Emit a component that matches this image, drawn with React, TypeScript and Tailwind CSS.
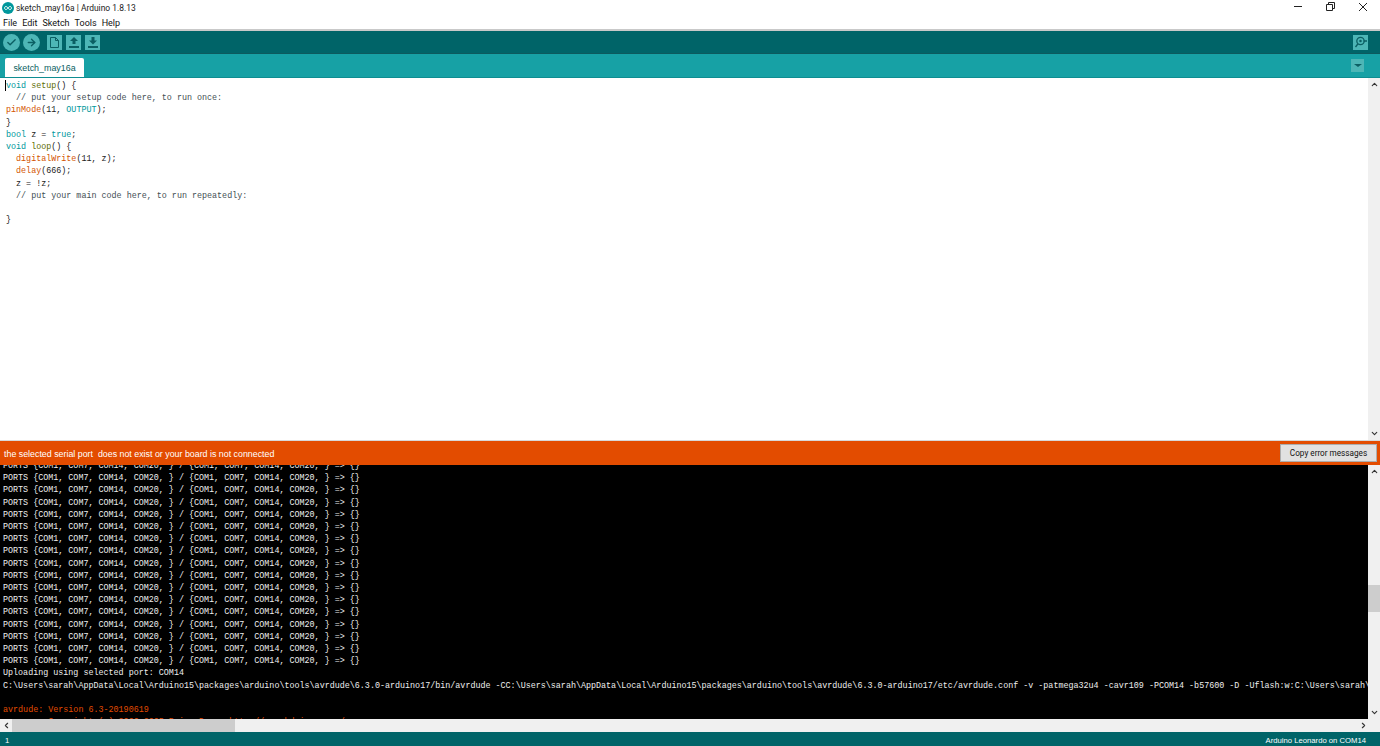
import React from 'react';
import { Check, ArrowRight, ChevronUp, ChevronDown, ChevronLeft, ChevronRight } from 'lucide-react';

const PORTS_LINE = 'PORTS {COM1, COM7, COM14, COM20, } / {COM1, COM7, COM14, COM20, } => {}';
const AVRDUDE_CMD =
  'C:\\Users\\sarah\\AppData\\Local\\Arduino15\\packages\\arduino\\tools\\avrdude\\6.3.0-arduino17/bin/avrdude -CC:\\Users\\sarah\\AppData\\Local\\Arduino15\\packages\\arduino\\tools\\avrdude\\6.3.0-arduino17/etc/avrdude.conf -v -patmega32u4 -cavr109 -PCOM14 -b57600 -D -Uflash:w:C:\\Users\\sarah\\AppData\\Local\\Temp\\arduino_build\\sketch_may16a.ino.hex:i';

const ToolSquare = ({ children }: { children: React.ReactNode }) => (
  <div className="w-[15px] h-[15px] bg-[#4db6b6] flex items-center justify-center">{children}</div>
);

const Keyword = ({ children }: { children: React.ReactNode }) => <span className="text-[#00979c]">{children}</span>;
const Struct = ({ children }: { children: React.ReactNode }) => <span className="text-[#5e6d03]">{children}</span>;
const Func = ({ children }: { children: React.ReactNode }) => <span className="text-[#d35400]">{children}</span>;
const Comment = ({ children }: { children: React.ReactNode }) => <span className="text-[#434f54]">{children}</span>;

export default function App() {
  return (
    <div className="w-[1380px] h-[746px] overflow-hidden flex flex-col bg-white font-['Liberation_Sans',sans-serif]">
      {/* Title bar */}
      <div className="h-[15px] flex items-center relative shrink-0">
        <svg viewBox="0 0 12 12" className="w-[12px] h-[12px] ml-[2px] mt-[1px]">
          <circle cx="6" cy="6" r="6" fill="#00979c" />
          <path d="M2.6 6c0-2 2.2-2 3.4 0s3.4 2 3.4 0-2.2-2-3.4 0-3.4 2-3.4 0z" fill="none" stroke="#fff" strokeWidth="1" />
        </svg>
        <span className="ml-[2px] mt-[1px] font-['Roboto',sans-serif] text-[8.45px] leading-none text-[#222]">sketch_may16a | Arduino 1.8.13</span>
        <svg width="86" height="14" viewBox="0 0 86 14" className="absolute right-0 top-0" fill="none" stroke="#222" strokeWidth="1">
          <path d="M0 6.500h8" />
          <path d="M32.500 4.500h6v6h-6zM34.500 4.500v-2h6v6h-2" />
          <path d="M65 3l8 8M73 3l-8 8" />
        </svg>
      </div>

      {/* Menu bar */}
      <div className="h-[14px] flex items-center gap-[5px] pl-[3px] pt-[4px] font-['Roboto',sans-serif] text-[9px] text-[#111] shrink-0">
        <span>File</span>
        <span>Edit</span>
        <span>Sketch</span>
        <span>Tools</span>
        <span>Help</span>
      </div>
      <div className="h-[2px] bg-[#c9c9c9] shrink-0" />

      {/* Toolbar */}
      <div className="h-[22px] bg-[#006468] flex items-center justify-between pl-[3px] pr-[12px] shrink-0">
        <div className="flex items-center">
          <div className="w-[17px] h-[17px] rounded-full bg-[#4db6b6] flex items-center justify-center">
            <Check className="w-[11px] h-[11px] text-[#0b5f63]" strokeWidth={3} />
          </div>
          <div className="w-[17px] h-[17px] rounded-full bg-[#4db6b6] flex items-center justify-center ml-[3px]">
            <ArrowRight className="w-[11px] h-[11px] text-[#0b5f63]" strokeWidth={3} />
          </div>
          <div className="flex gap-[4px] ml-[7px]">
            <ToolSquare>
              <svg width="9" height="11" viewBox="0 0 9 11" fill="none" stroke="#0b5f63" strokeWidth="1">
                <path d="M.5.500h5l3 3v7h-8zM5.500.500v3h3" />
              </svg>
            </ToolSquare>
            <ToolSquare>
              <svg width="10" height="11" viewBox="0 0 10 11" fill="#0b5f63">
                <path d="M5 0l4 4H6.500v3h-3V4H1zM0 9h10v2H0z" />
              </svg>
            </ToolSquare>
            <ToolSquare>
              <svg width="10" height="11" viewBox="0 0 10 11" fill="#0b5f63">
                <path d="M5 7.500l4-4H6.500V0h-3v3.500H1zM0 9h10v2H0z" />
              </svg>
            </ToolSquare>
          </div>
        </div>
        <ToolSquare>
          <svg width="13" height="12" viewBox="0 0 13 12" fill="none" stroke="#0b5f63" strokeWidth="1.300">
            <circle cx="6.500" cy="5" r="3.700" />
            <path d="M3.800 8L1.500 11M9.500 5H13" />
            <circle cx="6.500" cy="5" r=".6" fill="#0b5f63" />
          </svg>
        </ToolSquare>
      </div>
      <div className="h-px bg-[#0c5a5e] shrink-0" />

      {/* Tab strip */}
      <div className="h-[23px] bg-[#17a1a5] flex items-end justify-between pl-[5px] pr-[16px] shrink-0 relative">
        <div className="h-[19px] w-[79px] pt-[3px] bg-white rounded-t-[2px] flex items-center justify-center text-[8.9px] text-[#0b5f63]">
          sketch_may16a
        </div>
        <div className="w-[13px] h-[13px] bg-[#4db6b6] flex items-center justify-center mb-[5px]">
          <div className="w-0 h-0 border-l-[4px] border-r-[4px] border-t-[3px] border-l-transparent border-r-transparent border-t-[#0b5f63]" />
        </div>
      </div>
      <div className="h-px bg-[#0e8d91] shrink-0" />

      {/* Editor */}
      <div className="h-[363px] flex shrink-0 border-b border-[#d8d8d8]">
        <pre className="flex-1 relative pl-[6px] pt-[2px] font-['Liberation_Mono',monospace] text-[8.38px] leading-[12.2px] text-[#222] overflow-hidden">
          <div className="absolute left-[5px] top-[2px] w-px h-[11px] bg-black" />
          <Keyword>void</Keyword> <Struct>setup</Struct>() {'{'}{'\n'}
          {'  '}<Comment>// put your setup code here, to run once:</Comment>{'\n'}
          <Func>pinMode</Func>(11, <Keyword>OUTPUT</Keyword>);{'\n'}
          {'}'}{'\n'}
          <Keyword>bool</Keyword> z = <Keyword>true</Keyword>;{'\n'}
          <Keyword>void</Keyword> <Struct>loop</Struct>() {'{'}{'\n'}
          {'  '}<Func>digitalWrite</Func>(11, z);{'\n'}
          {'  '}<Func>delay</Func>(666);{'\n'}
          {'  '}z = !z;{'\n'}
          {'  '}<Comment>// put your main code here, to run repeatedly:</Comment>{'\n'}
          {'\n'}
          {'}'}
        </pre>
        <div className="w-[12px] bg-[#f0f0f0] flex flex-col justify-between items-center shrink-0 py-[2px]">
          <ChevronUp className="w-[9px] h-[9px] text-[#333]" strokeWidth={3} />
          <ChevronDown className="w-[9px] h-[9px] text-[#333]" strokeWidth={3} />
        </div>
      </div>

      {/* Status message */}
      <div className="h-[24px] bg-[#e34c00] flex items-center justify-between pl-[4px] pr-[3px] shrink-0">
        <span className="pt-[4px] text-[8.85px] text-white">the selected serial port&nbsp; does not exist or your board is not connected</span>
        <button className="w-[97px] h-[18px] bg-[#e1e1e1] border border-[#adadad] font-['Roboto',sans-serif] text-[8.2px] text-[#111] flex items-center justify-center">
          Copy error messages
        </button>
      </div>

      {/* Console */}
      <div className="h-[254px] flex shrink-0">
        <div className="flex-1 bg-black overflow-hidden pl-[3px] min-w-0 font-['Liberation_Mono',monospace] text-[8.38px] leading-[12.2px] whitespace-pre text-[#eee]">
          <div className="-mt-[5px]">
            {Array.from({ length: 17 }).map((_, i) => (
              <div key={i}>{PORTS_LINE}</div>
            ))}
            <div>Uploading using selected port: COM14</div>
            <div>{AVRDUDE_CMD}</div>
            <div>&nbsp;</div>
            <div className="text-[#e34c00]">avrdude: Version 6.3-20190619</div>
            <div className="text-[#e34c00]">         Copyright (c) 2000-2005 Brian Dean, http://www.bdmicro.com/</div>
          </div>
        </div>
        <div className="w-[12px] bg-[#f0f0f0] flex flex-col items-center justify-between py-[2px] shrink-0 relative">
          <ChevronUp className="w-[9px] h-[9px] text-[#333]" strokeWidth={3} />
          <div className="absolute left-0 top-[120px] w-[12px] h-[27px] bg-[#cdcdcd]" />
          <ChevronDown className="w-[9px] h-[9px] text-[#333]" strokeWidth={3} />
        </div>
      </div>

      {/* Horizontal scrollbar */}
      <div className="h-[13px] bg-[#f0f0f0] flex items-center shrink-0 pr-[12px]">
        <div className="w-[12px] flex justify-center">
          <ChevronLeft className="w-[9px] h-[9px] text-[#333]" strokeWidth={3} />
        </div>
        <div className="w-[223px] h-full bg-[#cdcdcd]" />
        <div className="flex-1" />
        <ChevronRight className="w-[9px] h-[9px] text-[#333]" strokeWidth={3} />
      </div>

      {/* Footer */}
      <div className="flex-1 bg-[#006468] flex items-center justify-between pt-[4px] pl-[5px] pr-[14px] text-[7.700px] leading-none text-white">
        <span>1</span>
        <span>Arduino Leonardo on COM14</span>
      </div>
    </div>
  );
}
